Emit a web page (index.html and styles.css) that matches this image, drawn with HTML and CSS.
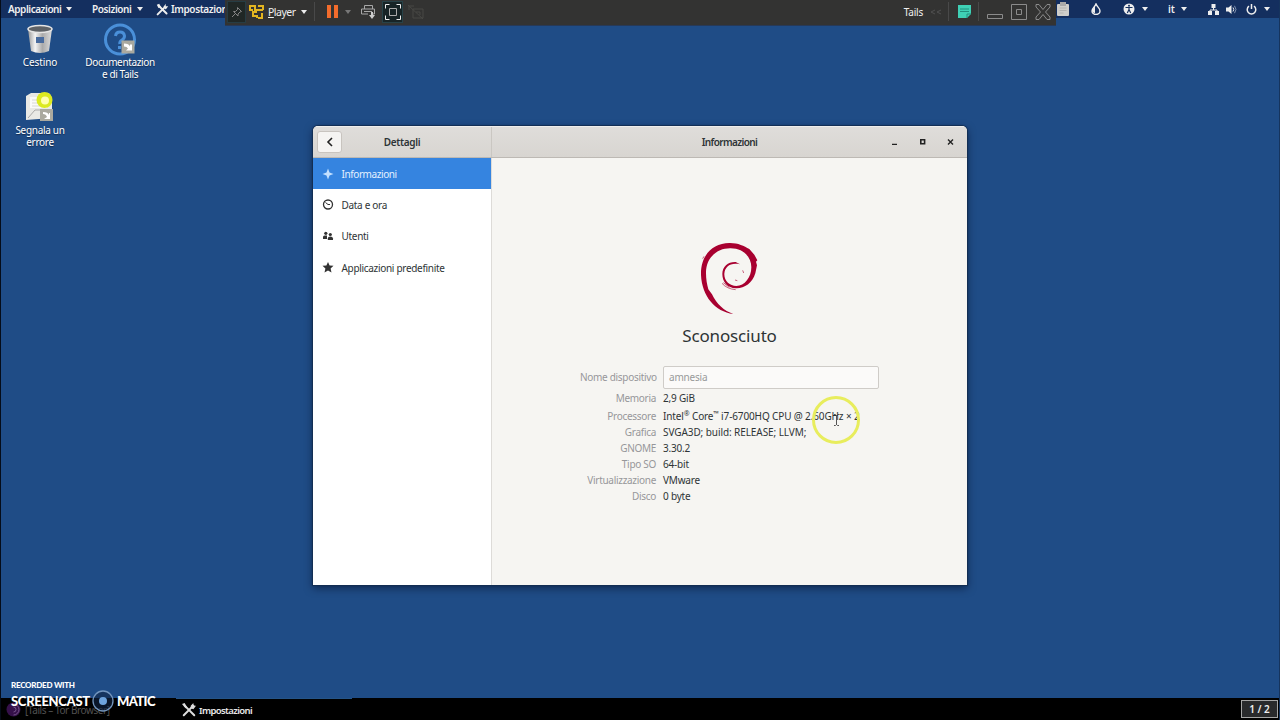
FILE: index.html
```html
<!DOCTYPE html>
<html lang="it">
  <head>
    <meta charset="utf-8">
    <title>Tails</title>
    <link rel="stylesheet" href="styles.css">
  </head>
  <body>
    <div class="topbar">
      <div class="menu apps"><span>Applicazioni</span> <i class="caret"></i></div>
      <div class="menu places"><span>Posizioni</span> <i class="caret"></i></div>
      <div class="menu current">
        <svg width="13" height="13" viewBox="0 0 16 16"><path d="M2 14 L10 6 M4 4 L13 13" stroke="#eee" stroke-width="2.4" stroke-linecap="round"/><path d="M9 5 L12 1 L12 4 L15 4 L12 8 Z M1 2 L4 1 L6 5 L3 6 Z" fill="#eee"/></svg>
        Impostazioni
      </div>
      <div class="tray">
        <svg class="clip" width="12" height="14" viewBox="0 0 12 14"><rect x="0" y="2" width="12" height="12" rx="1" fill="#cfcfcb"/><rect x="3" y="0" width="6" height="4" fill="#aaa"/><path d="M2.5 6h7M2.5 8.500h7M2.500 11h4" stroke="#b5b5b2"/></svg>
        <svg class="drop" width="10" height="12" viewBox="0 0 10 12"><path d="M5 1 C6 4 9 5 9 8 A4 3.500 0 0 1 1 8 C1 5 4 4 5 1Z" fill="none" stroke="#eee" stroke-width="1.400"/><path d="M4 3v7a3 3 0 0 1-3-3z" fill="#eee"/></svg>
        <svg class="access" width="12" height="12" viewBox="0 0 12 12"><circle cx="6" cy="6" r="5.500" fill="#eee"/><circle cx="6" cy="2.700" r="1" fill="#15305e"/><path d="M2.500 4.500h7M6 4.500v2.500M6 6.500L4.300 10M6 6.500L7.700 10" stroke="#15305e" stroke-width="1.200" fill="none"/></svg>
        <i class="caret"></i>
        <span class="lang">it</span>
        <i class="caret"></i>
        <svg class="net" width="11" height="11" viewBox="0 0 11 11"><path d="M3.500 0h4v4h-4zM0 7h4v4H0zM7 7h4v4H7z" fill="#eee"/><path d="M5.500 3v3M2 8V6h7v2" stroke="#eee" fill="none"/></svg>
        <svg class="vol" width="11" height="11" viewBox="0 0 11 11"><path d="M0 3.500h2.500L5.500 1v9L2.500 7.500H0z" fill="#eee"/><path d="M7 3.500q1.500 2 0 4" stroke="#eee" fill="none"/><path d="M8.500 1.800q3 3.700 0 7.400" stroke="#8494b0" fill="none"/></svg>
        <svg class="power" width="11" height="11" viewBox="0 0 11 11"><path d="M3 2.200a4.300 4.300 0 1 0 5 0M5.500 0v5" stroke="#eee" stroke-width="1.500" fill="none"/></svg>
        <i class="caret"></i>
      </div>
    </div>

    <div class="vmbar">
      <div class="pin">
        <svg width="14" height="14" viewBox="0 0 14 14"><path d="M7.500 2.500l4 4-1.500.5-2 2v2L3.500 6.500h2l2-2zM5.500 8.500L2 12" stroke="#858585" fill="none"/></svg>
      </div>
      <svg class="logo" width="15" height="15" viewBox="0 0 15 15"><path d="M0 2h6v4h3M1 1v5h3M9 2h5v4M9 6h5M13 9v5H9M8 8H4v4h4v2" stroke="#e3b520" stroke-width="2" fill="none"/></svg>
      <span class="player"><u>P</u>layer</span>
      <i class="caret"></i>
      <b class="sep"></b>
      <div class="pause"></div>
      <i class="caret dim"></i>
      <svg class="send" width="15" height="16" viewBox="0 0 15 16"><path d="M3.500 5V1.500h8V5M.5 5h13v5H10M7 10H.5V5M3 7.500h8" stroke="#a8a8a8" fill="none"/><path d="M10 8v3H8l3 4 3-4h-2V8z" fill="#ccc"/></svg>
      <div class="full">
        <svg width="16" height="16" viewBox="0 0 16 16"><path d="M.5 4.500v-4h4M11.500.5h4v4M15.500 11.500v4h-4M4.500 15.500h-4v-4" stroke="#eee" fill="none"/><path d="M4.500 4.500h7v7h-7z" stroke="#aaa" fill="none"/></svg>
      </div>
      <svg class="unity" width="16" height="14" viewBox="0 0 16 14"><path d="M1 5V1h5M5 4h10v9H5zM0 0l15 14M8 7h4v3" stroke="#484845" fill="none"/></svg>
      <div class="vmright">
        <span>Tails</span>
        <svg class="wave" width="13" height="6" viewBox="0 0 13 6"><path d="M6 1L2 3l4 2M12 1L8 3l4 2" stroke="#505050" fill="none"/></svg>
        <b class="sep"></b>
        <svg class="note" width="13" height="13" viewBox="0 0 13 13"><path d="M0 0h13v9l-4 4H0z" fill="#3fd0b5"/><path d="M9 13V9h4M2 4h9M2 6.500h9" stroke="#228e7c" fill="none"/></svg>
        <b class="sep"></b>
        <svg width="64" height="18" viewBox="0 0 64 18"><g stroke="#8b8b8b" fill="none"><path d="M.5 11.500h15v4H.5zM24.500 1.500h15v15h-15zM29.500 6.500h5v5h-5z"/><path d="M49 1.500h3l4 5 4-5h3v2.500L58.500 9l4.500 5v2.500h-3l-4-5-4 5h-3V14L53.500 9 49 4z"/></g></svg>
      </div>
    </div>

    <div class="shortcut trash">
      <svg width="28" height="32" viewBox="0 0 28 32"><defs><linearGradient id="metal"><stop offset="0" stop-color="#999"/><stop offset=".3" stop-color="#f4f4f4"/><stop offset=".6" stop-color="#aaa"/><stop offset="1" stop-color="#ddd"/></linearGradient></defs><path d="M2 5L5 27Q14 31 23 27L26 5z" fill="url(#metal)"/><ellipse cx="14" cy="5" rx="12" ry="3.500" fill="#5e6266" stroke="#e5e5e5" stroke-width="1.500"/><path d="M10 13h8v6h-8z" fill="#486b9e"/></svg>
      <p>Cestino</p>
    </div>
    <div class="shortcut docs">
      <svg width="34" height="34" viewBox="0 0 34 34"><circle cx="17" cy="16.500" r="14.500" fill="none" stroke="#4a90d9" stroke-width="3"/><path d="M12.500 13q.5-4 4.500-4t4.500 4q0 2.500-2.500 4t-2.200 4" fill="none" stroke="#4a90d9" stroke-width="3"/><rect x="15" y="23" width="3" height="3" fill="#4a90d9"/><rect x="18.500" y="17.500" width="13" height="13" fill="#aaa99f"/><path d="M21 20.500q5 0 6 3v-2h2v6h-6l2-2q-1-2-4-2z" fill="#fff"/></svg>
      <p>Documentazion<br>e di Tails</p>
    </div>
    <div class="shortcut report">
      <svg width="30" height="32" viewBox="0 0 30 32"><path d="M1 5L6 2h18l3 5v20L1 29z" fill="#e9e9e5"/><path d="M5 6h17v11H5z" fill="#fafafa"/><path d="M7 9h10M7 12h12M7 15h10" stroke="#d8d8d4"/><path d="M3 27l7-8h8l8 8" fill="none" stroke="#aaa"/><circle cx="19.500" cy="9" r="8" fill="#dcea20"/><circle cx="20" cy="9.500" r="4" fill="#ffffb0"/><rect x="15" y="18" width="13" height="12" fill="#aaa99f"/><path d="M18 21q5 0 6 3v-2h1v6h-6l3-2q-1-3-4-3z" fill="#fff"/></svg>
      <p>Segnala un<br>errore</p>
    </div>

    <div class="window">
      <div class="header">
        <div class="header-left">
          <div class="back"><svg width="8" height="10" viewBox="0 0 8 10"><path d="M6 1L2 5l4 4" stroke="#222" stroke-width="1.600" fill="none"/></svg></div>
          <span>Dettagli</span>
        </div>
        <div class="header-right">
          <span class="title">Informazioni</span>
          <svg class="controls" width="62" height="8" viewBox="0 0 62 8"><path d="M0 6.300h5" stroke="#222" stroke-width="1.200"/><path d="M28.800 1.800h3.800v4H28.800z" fill="none" stroke="#222" stroke-width="1.600"/><path d="M56 1.500l5 5M61 1.500l-5 5" stroke="#222" stroke-width="1.400"/></svg>
        </div>
      </div>
      <div class="content">
        <div class="sidebar">
          <div class="row selected"><svg width="12" height="12" viewBox="0 0 12 12"><path d="M6 .5L7.500 4.500 11.500 6 7.500 7.500 6 11.500 4.500 7.500.5 6 4.500 4.500z" fill="#c3e0ff"/></svg>Informazioni</div>
          <div class="row"><svg width="12" height="12" viewBox="0 0 12 12"><circle cx="6" cy="5.500" r="4.500" fill="none" stroke="#333" stroke-width="1.300"/><path d="M3.500 3.500L6 5.500h2" fill="none" stroke="#333"/></svg>Data e ora</div>
          <div class="row"><svg width="12" height="12" viewBox="0 0 12 12"><circle cx="3.800" cy="3.300" r="1.600" fill="#333"/><path d="M1 9V7q0-1.500 1.500-1.500H5V9z" fill="#333"/><circle cx="8.300" cy="4.500" r="1.600" fill="#333"/><path d="M5.800 10V8.500q0-2 2.500-2t2.700 2V10z" fill="#333"/></svg>Utenti</div>
          <div class="row"><svg width="12" height="12" viewBox="0 0 12 12"><path d="M6 0l1.600 3.400 3.900.4-2.900 2.600.9 4L6 8.500 2.500 10.400l.9-4L.5 3.800l3.900-.4z" fill="#333"/></svg>Applicazioni predefinite</div>
        </div>
        <div class="details">
          <svg class="swirl" width="80" height="85" viewBox="0 0 240 255">
            <path d="M130 237 C75 230 36 184 33 120 C31 62 68 23 120 24 C145 24 162 33 178 42 L193 59 L202 76 L198 80 L201 91 L196 115 C187 145 162 161 138 160 C112 159 97 140 97 117 C97 94 115 80 137 81 L150 88 C121 82 105 95 103 116 C102 138 119 153 139 153 C164 153 184 127 184 97 C184 66 160 40 122 40 C83 39 47 67 48 115 C48 132 51 149 55 163 L66 178 C80 207 102 228 130 237Z" fill="#a80030"/>
            <path d="M96 145q15 17 41 19M100 143l18 14M135 135l7 2M158 106l3 8M38 71l4-7" fill="none" stroke="#a80030" stroke-width="1.800"/>
          </svg>
          <h1>Sconosciuto</h1>
          <div class="specs">
            <label>Nome dispositivo</label><div class="field">amnesia</div>
            <label>Memoria</label><span class="mem">2,9 GiB</span>
            <label>Processore</label><span class="cpu">Intel<sup>®</sup> Core<sup>™</sup> i7-6700HQ CPU @ 2.60GHz × 2</span>
            <label>Grafica</label><span class="gpu">SVGA3D; build: RELEASE; LLVM;</span>
            <label>GNOME</label><span>3.30.2</span>
            <label>Tipo SO</label><span>64-bit</span>
            <label>Virtualizzazione</label><span>VMware</span>
            <label>Disco</label><span>0 byte</span>
          </div>
        </div>
      </div>
    </div>

    <div class="pointer">
      <svg width="7" height="12" viewBox="0 0 7 12"><path d="M1 .5h1.500l1 1 1-1H6M3.500 1v10M1 11.500h1.500l1-1 1 1H6" stroke="#555" fill="none"/></svg>
    </div>

    <div class="taskbar">
      <div class="task tor">
        <svg width="15" height="15" viewBox="0 0 15 15"><circle cx="7.500" cy="7.500" r="7" fill="#35104a"/><path d="M7.500 2a5.500 5.500 0 0 1 0 11M7.500 5a2.500 2.500 0 0 1 0 5" stroke="#76558b" fill="none"/></svg>
        [Tails – Tor Browser]
      </div>
      <div class="task active">
        <svg width="14" height="14" viewBox="0 0 16 16"><path d="M2 14L13 3M3 3l11 11" stroke="#ddd" stroke-width="2.300" stroke-linecap="round"/><path d="M10 3l3-3v3h3l-3 4-3-1zM0 1l3-1 3 5-2 1z" fill="#ddd"/></svg>
        Impostazioni
      </div>
      <div class="workspace">1 / 2</div>
    </div>

    <div class="watermark">
      <div class="small">RECORDED WITH</div>
      <div class="brand">
        <span class="screencast">SCREENCAST</span>
        <svg width="22" height="22" viewBox="0 0 22 22"><circle cx="11" cy="11" r="10" fill="#10254599" stroke="#7395bd" stroke-width="1.300"/><circle cx="11" cy="11" r="4" fill="#6ea3dc"/></svg>
        <span class="matic">MATIC</span>
      </div>
    </div>
  </body>
</html>
```
FILE: styles.css
```css
* {
  box-sizing: border-box;
}
body {
  margin: 0;
  width: 1280px;
  height: 720px;
  overflow: hidden;
  position: relative;
  background: #1f4c86;
  border-left: 1px solid #050c18;
  border-right: 1px solid #16345d;
  font-family: "Noto Sans", "Open Sans", sans-serif;
  font-size: 10px;
  color: #2e3436;
}
svg {
  flex: none;
  display: block;
}
.topbar {
  height: 18px;
  display: flex;
  align-items: center;
  background: #142f5f;
  color: #f0f0f0;
  font-weight: 600;
}
.menu {
  display: flex;
  align-items: center;
  gap: 5px;
  white-space: nowrap;
}
.apps {
  width: 84px;
  padding-left: 7px;
  letter-spacing: -0.45px;
}
.apps span {
  width: 52px;
}
.places {
  width: 71px;
  padding-left: 7px;
  letter-spacing: -0.4px;
}
.places span {
  width: 39px;
}
.menu .caret {
  margin-left: 1px;
}
.current {
  gap: 2px;
  letter-spacing: -0.4px;
}
.caret {
  flex: none;
  border: 3px solid transparent;
  border-top: 4px solid #eee;
  border-bottom: 0;
}
.tray {
  display: flex;
  align-items: center;
  margin-left: auto;
  padding-right: 9px;
}
.drop {
  margin-left: 22px;
}
.access {
  margin: 0 7px 0 22px;
}
.lang {
  margin: 0 6px 0 20px;
  width: 7px;
}
.net {
  margin-left: 21px;
}
.vol {
  margin-left: 7px;
}
.power {
  margin: 0 7px 0 9px;
}

.vmbar {
  position: absolute;
  left: 224px;
  top: 0;
  width: 831px;
  height: 26px;
  display: flex;
  align-items: center;
  padding: 0 4px 2px 2px;
  background: #333332;
  border-bottom: 1px solid #273957;
  color: #f0f0f0;
}
.pin {
  width: 19px;
  height: 22px;
  display: grid;
  place-items: center;
  background: #202725;
  border: 1px solid #263c43;
}
.logo {
  margin: 0 4px 0 3px;
}
.player {
  font-size: 10.5px;
  letter-spacing: -0.5px;
  width: 28px;
}
.player + .caret {
  margin-left: 5px;
}
.sep {
  width: 1px;
  height: 19px;
  background: #494949;
}
.vmbar > .sep {
  margin: 0 12px 0 7px;
}
.pause {
  width: 11px;
  height: 13px;
  border: solid #f36c2c;
  border-width: 0 4px;
}
.caret.dim {
  margin: 0 10px 0 7px;
  border-top-color: #777;
}
.full {
  width: 19px;
  height: 20px;
  margin: 0 6px 0 7px;
  display: grid;
  place-items: center;
  background: #172426;
  outline: 1px solid #274248;
}
.vmright {
  display: flex;
  align-items: center;
  margin-left: auto;
  padding-right: 1px;
}
.vmright span {
  letter-spacing: -0.2px;
}
.wave {
  margin: 0 12px 0 6px;
}
.wave + .sep {
  margin-left: -6px;
}
.note {
  margin: 0 7px 0 9px;
}
.note + .sep {
  margin-right: 8px;
}

.shortcut {
  position: absolute;
  width: 80px;
  color: #fff;
  text-align: center;
  line-height: 12px;
  text-shadow: 0 1px 1px #142a4b;
}
.shortcut svg {
  margin: auto;
}
.shortcut p {
  margin: 0;
}
.trash {
  left: -1px;
  top: 24px;
  letter-spacing: -0.1px;
}
.docs {
  left: 79px;
  top: 23px;
  letter-spacing: -0.37px;
}
.docs p {
  margin-top: -1px;
}
.report {
  left: -1px;
  top: 91px;
  letter-spacing: -0.3px;
}
.report p {
  margin-top: 1px;
}

.window {
  position: absolute;
  left: 312px;
  top: 126px;
  width: 654px;
  height: 459px;
  display: flex;
  flex-direction: column;
  border-radius: 5px 5px 0 0;
  background: #f6f5f2;
  overflow: hidden;
  box-shadow: 0 0 1px 1px #132e52, 0 3px 8px rgba(0, 10, 30, 0.55);
}
.header {
  height: 32px;
  display: flex;
  font-weight: 600;
  background: linear-gradient(#dfddda, #d8d5d1);
  border-top: 1px solid #efeeec;
  border-bottom: 1px solid #bdb9b4;
}
.header-left {
  width: 179px;
  position: relative;
  display: grid;
  place-items: center;
  letter-spacing: -0.3px;
  border-right: 1px solid #cac7c2;
}
.back {
  position: absolute;
  left: 4px;
  top: 4px;
  width: 25px;
  height: 22px;
  display: grid;
  place-items: center;
  background: #f5f4f2;
  border: 1px solid #c8c4bf;
  border-radius: 3px;
}
.header-right {
  flex: 1;
  position: relative;
  display: grid;
  place-items: center;
}
.title {
  letter-spacing: -0.6px;
}
.controls {
  position: absolute;
  right: 13px;
  top: 11px;
}
.content {
  flex: 1;
  display: flex;
}
.sidebar {
  width: 179px;
  background: #fff;
  border-right: 1px solid #dddbd8;
  letter-spacing: -0.31px;
}
.row {
  height: 31.3px;
  display: flex;
  align-items: center;
  gap: 7.5px;
  padding-left: 9px;
}
.selected {
  background: #3584e0;
  color: #e4f1ff;
  letter-spacing: -0.42px;
}
.details {
  flex: 1;
  display: flex;
  flex-direction: column;
  align-items: center;
}
.swirl {
  margin-top: 77px;
}
h1 {
  margin: 4px 0 17px;
  font-size: 17px;
  line-height: 24px;
  font-weight: 400;
  letter-spacing: -0.15px;
}
.specs {
  width: 299px;
  display: grid;
  grid-template-columns: 76px 216px;
  grid-template-rows: 24px 18px 17px repeat(5, 16px);
  column-gap: 7px;
  align-items: center;
  white-space: nowrap;
  letter-spacing: -0.2px;
}
.specs label {
  color: #96979a;
  text-align: right;
  letter-spacing: -0.3px;
}
.field {
  height: 23px;
  line-height: 21px;
  padding-left: 5px;
  color: #98999a;
  background: #fbfaf9;
  border: 1px solid #cfccc8;
  border-radius: 2px;
}
.cpu {
  letter-spacing: -0.13px;
}
.gpu {
  letter-spacing: -0.08px;
}
sup {
  font-size: 7px;
  line-height: 0;
}

.pointer {
  position: absolute;
  left: 811px;
  top: 396px;
  width: 48px;
  height: 48px;
  display: grid;
  place-items: center;
  border: 3px solid #e8ed5d;
  border-radius: 50%;
}

.taskbar {
  position: absolute;
  left: -1px;
  bottom: 0;
  width: 1280px;
  height: 22px;
  display: flex;
  background: #000;
}
.task {
  height: 22px;
  display: flex;
  align-items: center;
  gap: 4px;
  padding: 1px 0 0 6px;
  white-space: nowrap;
}
.tor {
  width: 176px;
  color: #505050;
  letter-spacing: -0.42px;
}
.active {
  width: 176px;
  gap: 3px;
  color: #e8e8e8;
  font-weight: 600;
  font-size: 9.5px;
  letter-spacing: -0.62px;
  border-top: 1px solid #255487;
}
.workspace {
  width: 37px;
  height: 18px;
  margin: 2px 2px 0 auto;
  display: grid;
  place-items: center;
  background: #292a2c;
  border: 1px solid #a5a5a5;
  color: #eee;
  font-weight: 600;
}

.watermark {
  position: absolute;
  left: 10px;
  top: 681px;
  color: #fff;
  font-family: Lato, sans-serif;
  font-weight: 900;
}
.small {
  font-size: 8px;
  line-height: 9px;
  letter-spacing: -0.25px;
}
.brand {
  display: flex;
  align-items: center;
  font-size: 13px;
}
.screencast {
  width: 81px;
  letter-spacing: -0.3px;
}
.matic {
  margin-left: 3px;
  letter-spacing: -0.6px;
}
```
